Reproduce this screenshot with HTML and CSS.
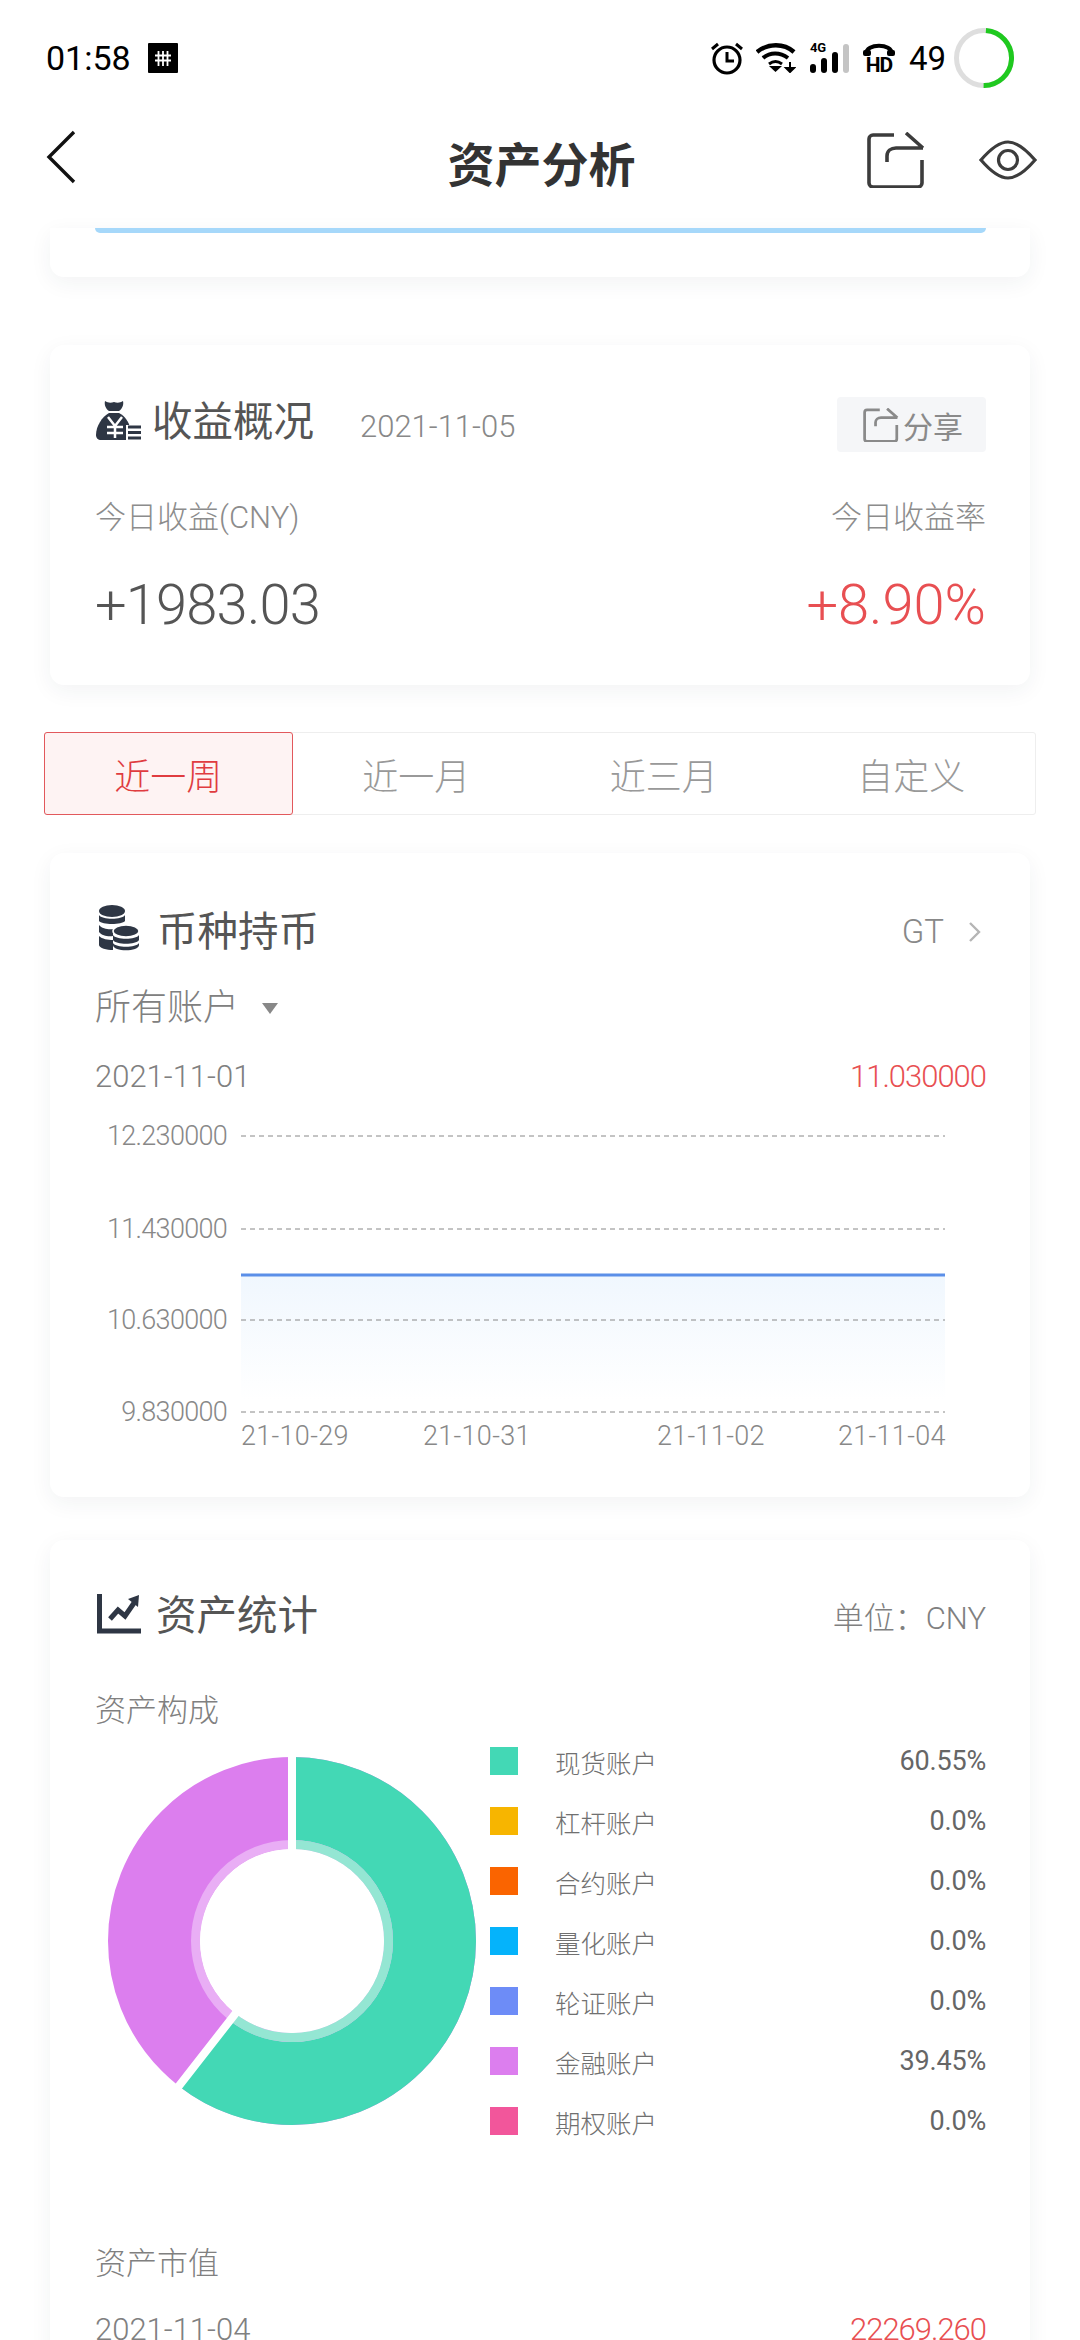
FILE: index.html
```html
<!DOCTYPE html>
<html lang="zh-CN">
<head>
    <meta charset="UTF-8">
    <meta name="viewport" content="width=device-width, initial-scale=1.0">
    <title>资产分析</title>
    <link rel="stylesheet" href="styles.css">
</head>
<body>
    <div class="page">
        <div class="status-bar">
            <div class="status-left">
                <span class="clock">01:58</span>
                <svg class="hash-box" width="30" height="30" viewBox="0 0 30 30">
                    <rect width="30" height="30" rx="1" fill="#000"/>
                    <path d="M10.500 8v15M15 8v15M19.500 8v15M7 12.500h16M7 17.500h16" stroke="#fff" stroke-width="1.800" fill="none"/>
                </svg>
            </div>
            <div class="status-right">
                <svg width="34" height="34" viewBox="0 0 34 34">
                    <circle cx="17" cy="19" r="13" fill="none" stroke="#000" stroke-width="3.200"/>
                    <path d="M17 11v9h7" fill="none" stroke="#000" stroke-width="3"/>
                    <path d="M2 8l6-5M32 8l-6-5" stroke="#000" stroke-width="3" fill="none"/>
                </svg>
                <svg class="wifi" width="40" height="30" viewBox="0 0 40 30">
                    <path d="M1 9c11-9 27-9 37 0" fill="none" stroke="#000" stroke-width="4.400"/>
                    <path d="M7 15c7-6 17-6 25 0" fill="none" stroke="#000" stroke-width="4"/>
                    <path d="M13 23h13l-6.500 6z" fill="#000"/>
                    <path d="M13 21c4-3 9-3 13 0" fill="none" stroke="#000" stroke-width="3"/>
                    <path d="M34 19v7M30 25h8l-4 4z" stroke="#000" stroke-width="2" fill="#000"/>
                </svg>
                <div class="signal">
                    <span class="net">4G</span>
                    <svg width="40" height="30" viewBox="0 0 40 30">
                        <rect x="0" y="21" width="6" height="9" rx="3" fill="#000"/>
                        <rect x="11" y="15" width="6" height="15" rx="3" fill="#000"/>
                        <rect x="22" y="9" width="6" height="21" rx="3" fill="#000"/>
                        <rect x="33" y="1" width="6" height="29" rx="3" fill="#c4c4c4"/>
                    </svg>
                </div>
                <div class="hd">
                    <svg width="32" height="14" viewBox="0 0 32 14">
                        <path d="M3 11C3 0 29 0 29 11" fill="none" stroke="#000" stroke-width="4"/>
                        <rect x="0" y="7" width="8" height="6" rx="2" fill="#000"/>
                        <rect x="24" y="7" width="8" height="6" rx="2" fill="#000"/>
                    </svg>
                    <span>HD</span>
                </div>
                <span class="battery">49</span>
                <svg class="battery-ring" width="60" height="60" viewBox="0 0 60 60">
                    <circle cx="30" cy="30" r="27.500" fill="none" stroke="#dedede" stroke-width="5"/>
                    <circle cx="30" cy="30" r="27.500" fill="none" stroke="#1fc91f" stroke-width="5" stroke-dasharray="84.700 172.100" transform="rotate(-86 30 30)"/>
                </svg>
            </div>
        </div>

        <div class="nav">
            <svg class="back" width="30" height="54" viewBox="0 0 30 54">
                <path d="M28 2L3 27l25 25" fill="none" stroke="#111" stroke-width="3.400"/>
            </svg>
            <h1>资产分析</h1>
            <div class="nav-icons">
                <svg width="58" height="56" viewBox="0 0 58 56">
                    <path d="M27 3H6a4 4 0 0 0-4 4v44a4 4 0 0 0 4 4h45a4 4 0 0 0 4-4V28" fill="none" stroke="#3c3c3c" stroke-width="3.600"/>
                    <path d="M20 30v-6c0-5 4-8 9-8h27M39 1l17 15" fill="none" stroke="#3c3c3c" stroke-width="3.600"/>
                </svg>
                <svg width="58" height="40" viewBox="0 0 58 40">
                    <path d="M2 20C14 6 22 2 29 2s15 4 27 18C44 34 36 38 29 38S14 34 2 20z" fill="none" stroke="#3c3c3c" stroke-width="3.200"/>
                    <circle cx="29" cy="20" r="9.500" fill="none" stroke="#3c3c3c" stroke-width="3.200"/>
                </svg>
            </div>
        </div>

        <div class="main">
            <div class="card card-top">
                <div class="top-bar"></div>
            </div>

            <div class="card card-profit">
                <div class="card-head">
                    <svg class="bag-icon" width="47" height="40" viewBox="0 0 47 40">
                        <path d="M10 1c3 2 6 2 9 1 3 1 6 1 9-1 1 4-1 8-4 10H14C11 9 9 5 10 1z" fill="#2e3644"/>
                        <path d="M14 13h10c6 3 10 9 11 15v7c0 3-2 5-5 5H6c-3 0-5-2-5-5 0-9 6-18 13-22z" fill="#2e3644"/>
                        <path d="M13 17l7 9 7-9M12 27h16M12 33h16M20 26v12" fill="none" stroke="#fff" stroke-width="2.500"/>
                        <path d="M31 25h16v15H31z" fill="#fff"/>
                        <path d="M33 27h13M33 32.500h13M33 38h13" stroke="#2e3644" stroke-width="3"/>
                    </svg>
                    <span class="card-title">收益概况</span>
                    <span class="head-date">2021-11-05</span>
                    <div class="share-btn">
                        <svg width="36" height="34" viewBox="0 0 58 56">
                            <path d="M27 3H6a4 4 0 0 0-4 4v44a4 4 0 0 0 4 4h45a4 4 0 0 0 4-4V28" fill="none" stroke="#8a8a8a" stroke-width="4.500"/>
                            <path d="M20 30v-6c0-5 4-8 9-8h27M39 1l17 15" fill="none" stroke="#8a8a8a" stroke-width="4.500"/>
                        </svg>
                        <span>分享</span>
                    </div>
                </div>
                <div class="row-between profit-labels">
                    <span>今日收益(CNY)</span>
                    <span>今日收益率</span>
                </div>
                <div class="row-between profit-values">
                    <span>+1983.03</span>
                    <span class="red">+8.90%</span>
                </div>
            </div>

            <div class="tabs">
                <div class="tab active">近一周</div>
                <div class="tab">近一月</div>
                <div class="tab">近三月</div>
                <div class="tab">自定义</div>
            </div>

            <div class="card card-coin">
                <div class="card-head coin-head">
                    <svg class="coins-icon" width="40" height="46" viewBox="0 0 40 46">
                        <ellipse cx="13" cy="6" rx="13" ry="6" fill="#2e3644"/>
                        <path d="M0 10c3 5 23 5 26 0v6c-3 4-23 4-26 0zM0 20c3 4 11 5 14 4v7c-4 1-11 0-14-4zM0 31c3 3 9 4 14 4v10c-6 0-14-2-14-5z" fill="#2e3644"/>
                        <ellipse cx="27" cy="26" rx="13" ry="6" fill="#2e3644" stroke="#fff" stroke-width="1.500"/>
                        <path d="M14 30c3 5 23 5 26 0v5c-3 5-23 5-26 0zM14 38c3 5 23 5 26 0v2c0 7-26 7-26 0z" fill="#2e3644"/>
                    </svg>
                    <span class="card-title">币种持币</span>
                    <span class="coin-name">GT</span>
                    <svg class="chevron" width="14" height="22" viewBox="0 0 14 22">
                        <path d="M2 2l9 9-9 9" fill="none" stroke="#b5b5b5" stroke-width="2.400"/>
                    </svg>
                </div>
                <div class="account-select">
                    <span>所有账户</span>
                    <i class="caret"></i>
                </div>
                <div class="row-between point-row">
                    <span>2021-11-01</span>
                    <span class="red">11.030000</span>
                </div>
                <svg class="line-chart" width="980" height="340" viewBox="0 0 980 340">
                    <defs>
                        <linearGradient id="areaFill" x1="0" y1="0" x2="0" y2="1">
                            <stop offset="0" stop-color="#f0f7fe"/>
                            <stop offset="1" stop-color="#ffffff"/>
                        </linearGradient>
                    </defs>
                    <rect x="191" y="155" width="704" height="125" fill="url(#areaFill)"/>
                    <g class="grid-lines">
                        <line x1="191" x2="895" y1="16" y2="16"/>
                        <line x1="191" x2="895" y1="109" y2="109"/>
                        <line x1="191" x2="895" y1="200" y2="200"/>
                        <line x1="191" x2="895" y1="292" y2="292"/>
                    </g>
                    <line x1="191" x2="895" y1="155" y2="155" stroke="#5b8fe8" stroke-width="3"/>
                    <g class="y-labels">
                        <text x="177" y="25">12.230000</text>
                        <text x="177" y="118">11.430000</text>
                        <text x="177" y="209">10.630000</text>
                        <text x="177" y="301">9.830000</text>
                    </g>
                    <g class="x-labels">
                        <text x="191" y="325">21-10-29</text>
                        <text x="373" y="325">21-10-31</text>
                        <text x="607" y="325">21-11-02</text>
                        <text x="788" y="325">21-11-04</text>
                    </g>
                </svg>
            </div>

            <div class="card card-asset">
                <div class="card-head asset-head">
                    <svg class="trend-icon" width="44" height="40" viewBox="0 0 44 40">
                        <path d="M2.500 0v37H44" fill="none" stroke="#2e3644" stroke-width="5"/>
                        <path d="M13 25l8-9 7 6 9-13" fill="none" stroke="#2e3644" stroke-width="5"/>
                        <path d="M31 5l11-4-1 12z" fill="#2e3644"/>
                    </svg>
                    <span class="card-title">资产统计</span>
                    <span class="unit">单位：CNY</span>
                </div>
                <div class="sub-title">资产构成</div>
                <div class="asset-body">
                    <svg class="donut" width="370" height="370" viewBox="-185 -185 370 370">
                        <g transform="rotate(-90)">
                            <circle r="138" fill="none" stroke="#dc7eee" stroke-width="92"/>
                            <circle r="138" fill="none" stroke="#43d8b5" stroke-width="92" stroke-dasharray="525 867.100"/>
                            <circle r="96.500" fill="none" stroke="#e9aef5" stroke-width="9"/>
                            <circle r="96.500" fill="none" stroke="#94e6d3" stroke-width="9" stroke-dasharray="367.100 606.300"/>
                        </g>
                        <path d="M0 0V-190M0 0L-117 150" stroke="#fff" stroke-width="8"/>
                        <circle r="92" fill="#fff"/>
                    </svg>
                    <ul class="legend">
                        <li><i class="swatch spot"></i><span class="legend-name">现货账户</span><span class="legend-value">60.55%</span></li>
                        <li><i class="swatch margin"></i><span class="legend-name">杠杆账户</span><span class="legend-value">0.0%</span></li>
                        <li><i class="swatch futures"></i><span class="legend-name">合约账户</span><span class="legend-value">0.0%</span></li>
                        <li><i class="swatch quant"></i><span class="legend-name">量化账户</span><span class="legend-value">0.0%</span></li>
                        <li><i class="swatch warrant"></i><span class="legend-name">轮证账户</span><span class="legend-value">0.0%</span></li>
                        <li><i class="swatch finance"></i><span class="legend-name">金融账户</span><span class="legend-value">39.45%</span></li>
                        <li><i class="swatch options"></i><span class="legend-name">期权账户</span><span class="legend-value">0.0%</span></li>
                    </ul>
                </div>
                <div class="sub-title market-title">资产市值</div>
                <div class="row-between point-row market-row">
                    <span>2021-11-04</span>
                    <span class="red">22269.260</span>
                </div>
            </div>
        </div>
    </div>
</body>
</html>
```

FILE: styles.css
```css
* {
    box-sizing: border-box;
}
html, body {
    margin: 0;
    padding: 0;
    background: #fff;
}
body {
    font-family: Roboto, "Noto Sans CJK SC", sans-serif;
    color: #555;
}
svg {
    display: block;
    flex: none;
}
.page {
    width: 1080px;
    height: 2340px;
    overflow: hidden;
}
.status-bar {
    height: 100px;
    padding: 16px 66px 0 46px;
    display: flex;
    justify-content: space-between;
    align-items: center;
}
.status-left {
    display: flex;
    align-items: center;
    gap: 17px;
}
.clock {
    font-size: 34px;
    font-weight: 400;
    color: #000;
}
.status-right {
    display: flex;
    align-items: center;
    gap: 12px;
}
.signal {
    position: relative;
    margin-left: 2px;
}
.net {
    position: absolute;
    left: 0;
    top: -2px;
    font-size: 13px;
    line-height: 14px;
    font-weight: 700;
    color: #000;
}
.hd {
    width: 32px;
    margin-left: 1px;
    font-size: 21px;
    font-weight: 700;
    line-height: 16px;
    color: #000;
    text-align: center;
}
.hd span {
    display: block;
    letter-spacing: -1px;
}
.battery {
    font-size: 33px;
    font-weight: 400;
    color: #000;
    margin-left: 2px;
    margin-right: -4px;
}
.nav {
    height: 128px;
    padding: 0 43px 0 46px;
    display: grid;
    grid-template-columns: 1fr auto 1fr;
    align-items: center;
}
.nav h1 {
    margin: 0 0 5px;
    font-size: 47px;
    font-weight: 700;
    color: #333;
}
.back {
    margin-bottom: 14px;
}
.nav-icons {
    display: flex;
    justify-content: flex-end;
    align-items: center;
    gap: 54px;
    margin-bottom: 8px;
}
.main {
    padding: 0 50px;
}
.card {
    background: #fff;
    border-radius: 14px;
    box-shadow: 0 6px 22px rgba(40, 50, 70, 0.06);
    padding: 0 44px 0 45px;
}
.card-top {
    height: 49px;
    border-radius: 0 0 14px 14px;
}
.top-bar {
    height: 5px;
    background: #a6d8fa;
    border-radius: 0 0 5px 5px;
}
.card-head {
    display: flex;
    align-items: center;
    min-height: 50px;
}
.card-title {
    font-size: 40.5px;
    line-height: 50px;
    color: #555;
}
.red {
    color: #e84f52;
}
.row-between {
    display: flex;
    justify-content: space-between;
    align-items: center;
}
.card-profit {
    margin-top: 68px;
    height: 340px;
    padding-top: 52px;
}
.card-profit .card-title {
    margin-bottom: 5px;
}
.bag-icon {
    margin-right: 10px;
    margin-bottom: 9px;
}
.head-date {
    margin-left: 46px;
    margin-top: 5px;
    font-size: 31px;
    line-height: 40px;
    font-weight: 300;
    color: #888;
}
.share-btn {
    margin-left: auto;
    width: 149px;
    height: 55px;
    padding-left: 26px;
    display: flex;
    align-items: center;
    gap: 4px;
    background: #f5f6f8;
    border-radius: 4px;
    font-size: 30px;
    color: #8a8a8a;
}
.profit-labels {
    margin-top: 46px;
    font-size: 31px;
    line-height: 40px;
    font-weight: 300;
    color: #8c8c8c;
}
.profit-values {
    margin-top: 35px;
    font-size: 56px;
    line-height: 64px;
    font-weight: 300;
    letter-spacing: -0.8px;
}
.profit-values .red {
    letter-spacing: 0;
}
.tabs {
    margin: 47px -6px 0;
    height: 83px;
    display: grid;
    grid-template-columns: repeat(4, 1fr);
    border: 1px solid #eee;
    border-radius: 3px;
}
.tab {
    display: flex;
    align-items: center;
    justify-content: center;
    font-size: 36px;
    font-weight: 300;
    color: #999;
}
.tab.active {
    margin: -1px 0 -1px -1px;
    background: #fef3f3;
    border: 1px solid #e2585c;
    border-radius: 3px;
    color: #e03c40;
}
.card-coin {
    margin-top: 38px;
    height: 644px;
    padding-top: 52px;
}
.coins-icon {
    margin-left: 4px;
    margin-right: 18px;
    margin-bottom: 7px;
}
.coin-name {
    margin-left: auto;
    font-size: 33px;
    font-weight: 300;
    color: #888;
}
.chevron {
    margin-left: 24px;
    margin-right: 4px;
}
.account-select {
    margin-top: 27px;
    display: flex;
    align-items: center;
    gap: 23px;
    font-size: 36px;
    line-height: 46px;
    font-weight: 300;
    color: #808080;
}
.caret {
    width: 0;
    height: 0;
    border-left: 8px solid transparent;
    border-right: 8px solid transparent;
    border-top: 11px solid #888;
}
.point-row {
    margin-top: 26px;
    font-size: 31px;
    line-height: 40px;
    font-weight: 300;
    color: #808080;
}
.point-row .red {
    letter-spacing: -1px;
}
.line-chart {
    margin: 23px 0 0 -45px;
}
.grid-lines line {
    stroke: #888;
    stroke-width: 1;
    stroke-dasharray: 5 4;
}
.y-labels text {
    font-size: 27px;
    font-weight: 300;
    fill: #888;
    text-anchor: end;
    letter-spacing: -0.7px;
}
.x-labels text {
    font-size: 27px;
    font-weight: 300;
    fill: #888;
    letter-spacing: 0.3px;
}
.card-asset {
    margin-top: 43px;
    height: 900px;
    padding-top: 51px;
}
.trend-icon {
    margin-left: 2px;
    margin-right: 15px;
    margin-bottom: 5px;
}
.unit {
    margin-left: auto;
    margin-top: 6px;
    font-size: 31px;
    line-height: 40px;
    font-weight: 300;
    color: #808080;
}
.sub-title {
    margin-top: 50px;
    font-size: 31px;
    line-height: 40px;
    font-weight: 300;
    color: #808080;
}
.asset-body {
    margin-top: 25px;
    display: flex;
}
.donut {
    margin-left: 12px;
}
.legend {
    list-style: none;
    margin: -25px 0 0 13px;
    padding: 0;
    flex: 1;
}
.legend li {
    height: 60px;
    display: flex;
    align-items: center;
}
.swatch {
    width: 28px;
    height: 28px;
    margin-right: 37px;
}
.spot { background: #43d8b5; }
.margin { background: #f7b500; }
.futures { background: #fa6400; }
.quant { background: #05b3fb; }
.warrant { background: #6d8cf7; }
.finance { background: #dc7eee; }
.options { background: #f2569b; }
.legend-name {
    font-size: 25.5px;
    font-weight: 300;
    color: #707070;
}
.legend-value {
    margin-left: auto;
    font-size: 27px;
    color: #666;
    letter-spacing: -0.2px;
}
.market-title {
    margin-top: 93px;
}
.market-row {
    margin-top: 26px;
}
```
